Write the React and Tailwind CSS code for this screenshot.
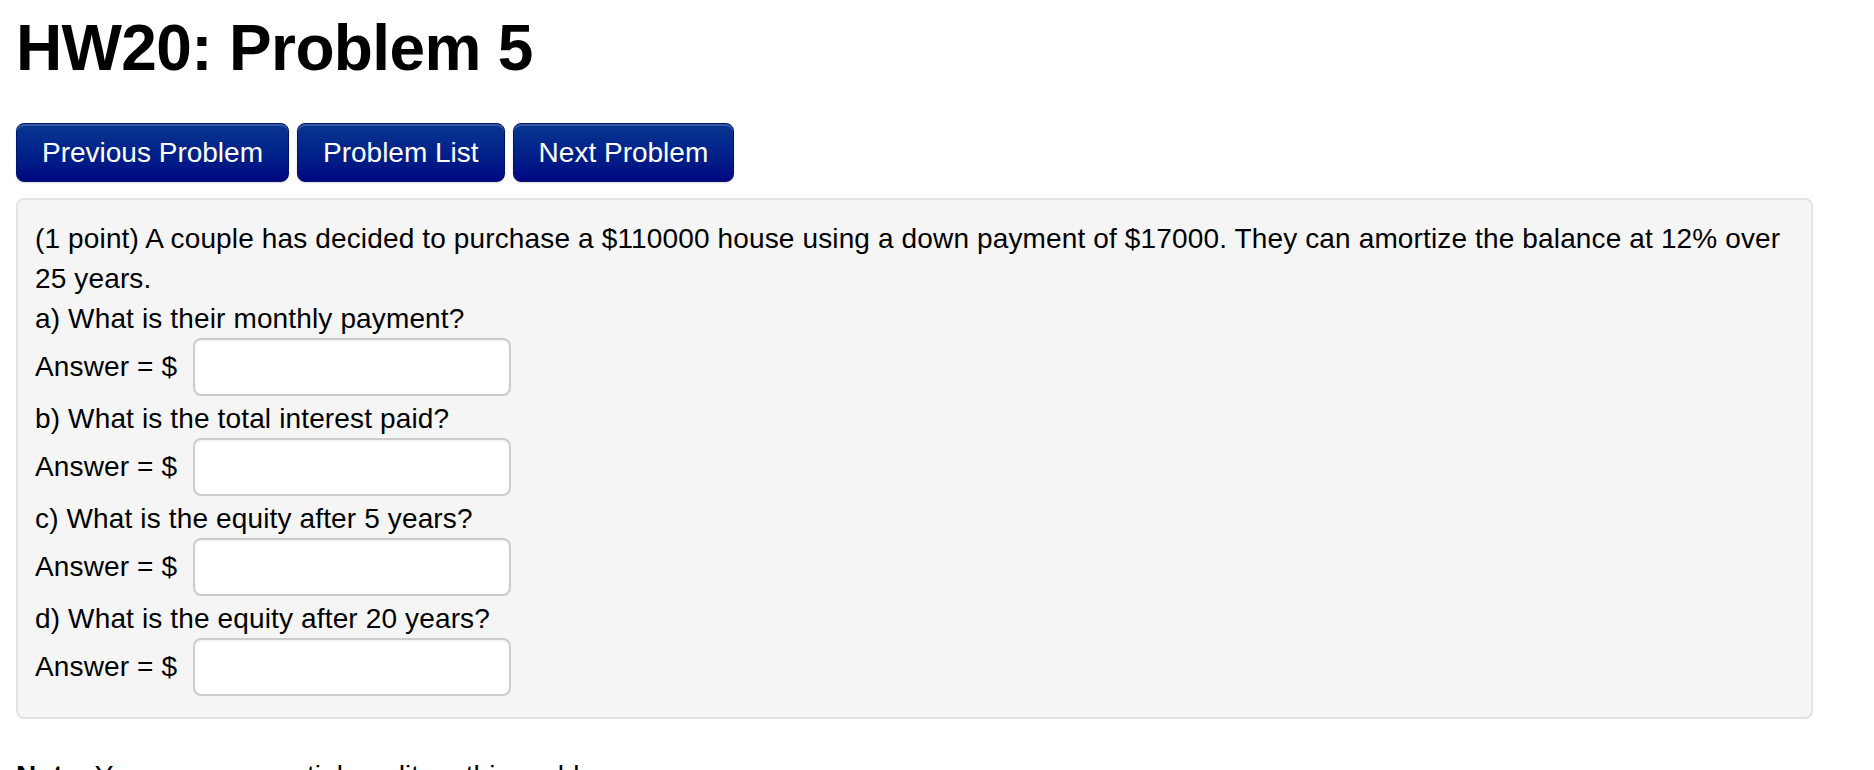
import React from 'react';

const questions = [
    'a) What is their monthly payment?',
    'b) What is the total interest paid?',
    'c) What is the equity after 5 years?',
    'd) What is the equity after 20 years?',
];

const NavButton = ({ label }) => (
    <button
        type="button"
        className="h-[59px] px-[25px] rounded-[8px] border border-[#001468] bg-gradient-to-b from-[#0b3592] to-[#000580] text-white text-[28px] leading-none shadow-[inset_0_2px_0_rgba(255,255,255,0.18),0_1px_2px_rgba(0,0,0,0.15)] flex items-center"
    >
        {label}
    </button>
);

const AnswerRow = () => (
    <div className="flex items-center h-[60px] -mt-[2px] mb-[2px]">
        <span>Answer = $</span>
        <input
            type="text"
            className="ml-[16px] w-[318px] h-[58px] bg-white border-2 border-[#cccccc] rounded-[8px] shadow-[inset_0_1px_2px_rgba(0,0,0,0.08)] outline-none px-3"
        />
    </div>
);

export default function App() {
    return (
        <div className="min-h-[770px] bg-white text-black px-[16px] font-['Liberation_Sans',Arial,sans-serif]">
            {/* Title */}
            <h1 className="pt-[8px] text-[64px] leading-[80px] font-bold tracking-[-0.01em]">HW20: Problem 5</h1>

            {/* Navigation */}
            <div className="mt-[35px] flex gap-[8px]">
                <NavButton label="Previous Problem" />
                <NavButton label="Problem List" />
                <NavButton label="Next Problem" />
            </div>

            {/* Problem body */}
            <div className="mt-[16px] w-[1797px] bg-[#f5f5f5] border-2 border-[#e3e3e3] rounded-[8px] pt-[19px] pb-[18px] px-[17px] text-[28px] leading-[40px] tracking-[0.14px]">
                <p>
                    (1 point) A couple has decided to purchase a $110000 house using a down payment of $17000. They can amortize the balance at 12% over 25 years.
                </p>
                {questions.map((q) => (
                    <div key={q}>
                        <div>{q}</div>
                        <AnswerRow />
                    </div>
                ))}
            </div>

            <p className="mt-[37px] text-[28px] leading-[40px]">
                <b>Note:</b> You can earn partial credit on this problem.
            </p>
        </div>
    );
}
